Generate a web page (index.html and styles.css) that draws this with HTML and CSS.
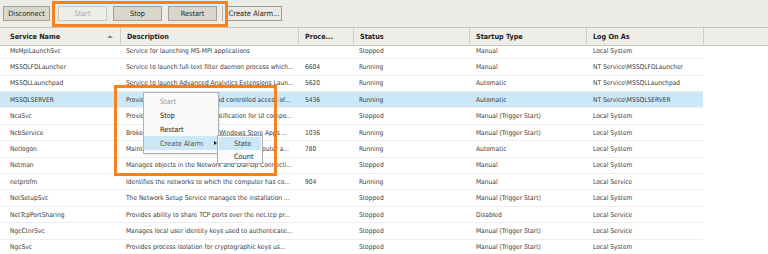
FILE: index.html
```html
<!DOCTYPE html>
<html>
<head>
<meta charset="utf-8">
<link rel="stylesheet" href="styles.css">
</head>
<body>
<div class="app">
  <div class="toolbar">
    <div class="btn">Disconnect</div>
    <div class="btn btn-start disabled">Start</div>
    <div class="btn btn-gap">Stop</div>
    <div class="btn btn-gap">Restart</div>
    <div class="tb-sep"></div>
    <div class="btn btn-alarm">Create Alarm...</div>
  </div>
  <div class="list">
    <div class="head">
      <div class="hc hc-first"><span>Service Name</span><span class="sort"></span></div>
      <div class="hc">Description</div>
      <div class="hc">Proce...</div>
      <div class="hc">Status</div>
      <div class="hc">Startup Type</div>
      <div class="hc">Log On As</div>
      <div class="hc hc-fill"></div>
    </div>
    <div class="body">
      <div class="rows">
        <div class="row"><div class="c c1">MsMpiLaunchSvc</div><div class="c">Service for launching MS-MPI applications</div><div class="c"></div><div class="c">Stopped</div><div class="c">Manual</div><div class="c">Local System</div></div>
        <div class="row"><div class="c c1">MSSQLFDLauncher</div><div class="c">Service to launch full-text filter daemon process which...</div><div class="c">6604</div><div class="c">Running</div><div class="c">Manual</div><div class="c">NT Service\MSSQLFDLauncher</div></div>
        <div class="row"><div class="c c1">MSSQLLaunchpad</div><div class="c">Service to launch Advanced Analytics Extensions Laun...</div><div class="c">5620</div><div class="c">Running</div><div class="c">Automatic</div><div class="c">NT Service\MSSQLLaunchpad</div></div>
        <div class="row selected"><div class="c c1">MSSQLSERVER</div><div class="c">Provides storage, processing and controlled access of...</div><div class="c">5436</div><div class="c">Running</div><div class="c">Automatic</div><div class="c">NT Service\MSSQLSERVER</div></div>
        <div class="row"><div class="c c1">NcaSvc</div><div class="c">Provides DirectAccess status notification for UI compo...</div><div class="c"></div><div class="c">Stopped</div><div class="c">Manual (Trigger Start)</div><div class="c">Local System</div></div>
        <div class="row"><div class="c c1">NcbService</div><div class="c">Brokers connections that allow Windows Store Apps ...</div><div class="c">1036</div><div class="c">Running</div><div class="c">Manual (Trigger Start)</div><div class="c">Local System</div></div>
        <div class="row"><div class="c c1">Netlogon</div><div class="c">Maintains a secure channel between this computer a...</div><div class="c">780</div><div class="c">Running</div><div class="c">Automatic</div><div class="c">Local System</div></div>
        <div class="row"><div class="c c1">Netman</div><div class="c">Manages objects in the Network and Dial-Up Connecti...</div><div class="c"></div><div class="c">Stopped</div><div class="c">Manual</div><div class="c">Local System</div></div>
        <div class="row"><div class="c c1">netprofm</div><div class="c">Identifies the networks to which the computer has co...</div><div class="c">904</div><div class="c">Running</div><div class="c">Manual</div><div class="c">Local Service</div></div>
        <div class="row"><div class="c c1">NetSetupSvc</div><div class="c">The Network Setup Service manages the installation ...</div><div class="c"></div><div class="c">Stopped</div><div class="c">Manual (Trigger Start)</div><div class="c">Local System</div></div>
        <div class="row"><div class="c c1">NetTcpPortSharing</div><div class="c">Provides ability to share TCP ports over the net.tcp pr...</div><div class="c"></div><div class="c">Stopped</div><div class="c">Disabled</div><div class="c">Local Service</div></div>
        <div class="row"><div class="c c1">NgcCtnrSvc</div><div class="c">Manages local user identity keys used to authenticate...</div><div class="c"></div><div class="c">Stopped</div><div class="c">Manual (Trigger Start)</div><div class="c">Local Service</div></div>
        <div class="row"><div class="c c1">NgcSvc</div><div class="c">Provides process isolation for cryptographic keys us...</div><div class="c"></div><div class="c">Stopped</div><div class="c">Manual (Trigger Start)</div><div class="c">Local System</div></div>
      </div>
    </div>
  </div>

  <div class="menu">
    <div class="mi disabled">Start</div>
    <div class="mi">Stop</div>
    <div class="mi">Restart</div>
    <div class="mi hot">Create Alarm<span class="arrow"></span></div>
  </div>
  <div class="submenu">
    <div class="si hot">State</div>
    <div class="si">Count</div>
  </div>

  <div class="mark mark-toolbar"></div>
  <div class="mark mark-menu"></div>
</div>
</body>
</html>
```

FILE: styles.css
```css
* { box-sizing: border-box; }
html, body { margin: 0; padding: 0; }
body {
  width: 768px;
  height: 254px;
  overflow: hidden;
  background: #ffffff;
  font-family: "DejaVu Sans Condensed", "DejaVu Sans", sans-serif;
  font-size: 6.6px;
  color: #333333;
}
.app { position: relative; width: 768px; height: 254px; overflow: hidden; }

/* toolbar */
.toolbar {
  height: 27px;
  background: #ecebe5;
  display: flex;
  align-items: center;
  padding-left: 3px;
}
.btn {
  height: 15px;
  width: 49px;
  border: 1px solid #a3a199;
  background: #d9d7cc;
  color: #1c1c1c;
  font-size: 7.3px;
  display: flex;
  align-items: center;
  justify-content: center;
}
.btn:first-child { width: 47px; }
.btn-start { margin-left: 8px; }
.btn-gap { margin-left: 6px; }
.btn.disabled { background: #efeee8; border-color: #cac8bf; color: #a9a9a9; }
.tb-sep { width: 1px; height: 15px; background: #b5b3aa; margin-left: 5px; }
.btn-alarm { margin-left: 3px; width: 56px; background: #eae9e2; border-color: #9d9b93; font-size: 7.5px; }

/* list */
.head {
  display: grid;
  grid-template-columns: 120px 178px 55px 116px 117px 117px 1fr;
  height: 19px;
  background: #eeede8;
  border-top: 1px solid #c9c7bf;
  border-bottom: 1px solid #c9c7bf;
  font-size: 7.2px;
}
.hc {
  border-left: 1px solid #cfcdc5;
  padding-left: 6px;
  font-weight: bold;
  color: #1e1e1e;
  display: flex;
  align-items: center;
  white-space: nowrap;
  overflow: hidden;
}
.hc-first { border-left: none; padding-left: 10px; padding-right: 7px; justify-content: space-between; }
.sort {
  width: 0; height: 0;
  border-left: 3px solid transparent;
  border-right: 3px solid transparent;
  border-bottom: 3px solid #8c8c8c;
}
.body { height: 208px; overflow: hidden; background: #ffffff; }
.rows { margin-top: -3.1px; }
.row {
  display: grid;
  grid-template-columns: 120px 178px 55px 116px 117px 117px;
  width: 703px;
  height: 16.4px;
  border-bottom: 1px solid #ededed;
  align-items: center;
}
.row.selected { background: #cce8f7; }
.c { padding-left: 6px; white-space: nowrap; overflow: hidden; color: #3a3a3a; }
.c:nth-child(3) { padding-left: 7px; }
.c:nth-child(5), .c:nth-child(6) { padding-left: 7px; }
.c1 { padding-left: 10px; }

/* context menu */
.menu {
  position: absolute;
  left: 143px;
  top: 92px;
  width: 76px;
  height: 62px;
  background: #f9f9f9;
  border: 1px solid #b3b3b3;
  padding: 1px 0 4px 0;
  font-size: 7.3px;
  color: #1a1a1a;
  box-shadow: 1px 1px 1px rgba(0,0,0,0.08);
}
.mi { height: 14px; padding-left: 16px; display: flex; align-items: center; position: relative; }
.mi.disabled { color: #9a9a9a; }
.mi.hot { background: #cce8f7; color: #555; }
.arrow {
  position: absolute;
  left: 70px;
  top: 4.5px;
  width: 0; height: 0;
  border-top: 2.5px solid transparent;
  border-bottom: 2.5px solid transparent;
  border-left: 3px solid #222;
}
.submenu {
  position: absolute;
  left: 217px;
  top: 135px;
  width: 46px;
  height: 29px;
  background: #fbfbfb;
  border: 1px solid #ababab;
  padding: 1px;
  font-size: 7.3px;
  color: #1a1a1a;
}
.si { height: 13px; padding-left: 15px; display: flex; align-items: center; }
.si.hot { background: #cce8f7; color: #444; }

/* annotation boxes */
.mark { position: absolute; border: 3px solid #f5821f; }
.mark-toolbar { left: 52px; top: 1px; width: 176px; height: 26px; }
.mark-menu { left: 114px; top: 85px; width: 163px; height: 91px; }
```
